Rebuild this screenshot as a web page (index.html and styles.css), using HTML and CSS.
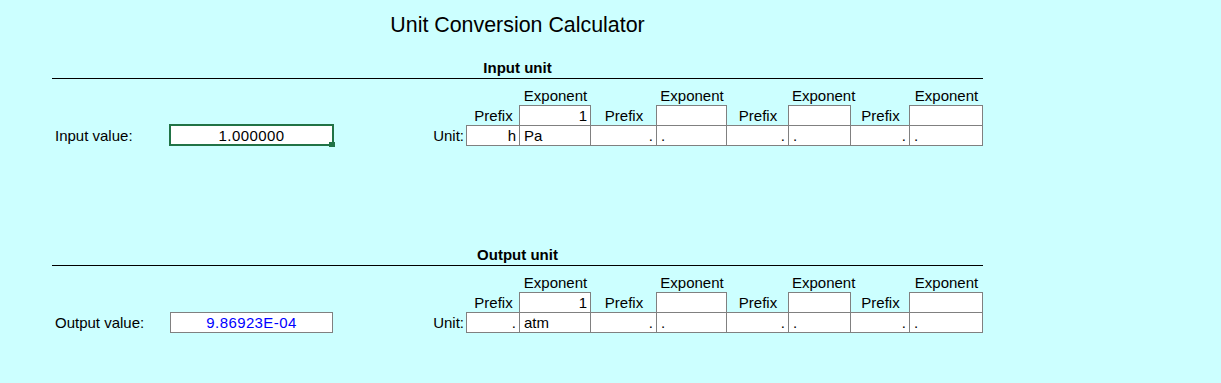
FILE: index.html
```html
<!DOCTYPE html>
<html lang="en">
<head>
    <meta charset="UTF-8">
    <meta name="viewport" content="width=device-width, initial-scale=1.0">
    <title>Unit Conversion Calculator</title>
    <link rel="stylesheet" href="styles.css">
</head>
<body>
    <div class="sheet">
        <h1 class="title">Unit Conversion Calculator</h1>

        <div class="block">
            <div class="block-head">Input unit</div>
            <div class="grid">
                <div class="span4"></div>
                <div class="label center">Exponent</div>
                <div></div>
                <div class="label center">Exponent</div>
                <div></div>
                <div class="label center">Exponent</div>
                <div></div>
                <div class="label center">Exponent</div>

                <div class="span3"></div>
                <div class="label center">Prefix</div>
                <div class="box right">1</div>
                <div class="label center">Prefix</div>
                <div class="box right"></div>
                <div class="label center">Prefix</div>
                <div class="box right"></div>
                <div class="label center">Prefix</div>
                <div class="box right"></div>

                <div class="label name">Input value:</div>
                <div class="value selected">1.000000<span class="handle"></span></div>
                <div class="label right">Unit:</div>
                <div class="box right">h</div>
                <div class="box">Pa</div>
                <div class="box right">.</div>
                <div class="box">.</div>
                <div class="box right">.</div>
                <div class="box">.</div>
                <div class="box right">.</div>
                <div class="box">.</div>
            </div>
        </div>

        <div class="block">
            <div class="block-head">Output unit</div>
            <div class="grid">
                <div class="span4"></div>
                <div class="label center">Exponent</div>
                <div></div>
                <div class="label center">Exponent</div>
                <div></div>
                <div class="label center">Exponent</div>
                <div></div>
                <div class="label center">Exponent</div>

                <div class="span3"></div>
                <div class="label center">Prefix</div>
                <div class="box right">1</div>
                <div class="label center">Prefix</div>
                <div class="box right"></div>
                <div class="label center">Prefix</div>
                <div class="box right"></div>
                <div class="label center">Prefix</div>
                <div class="box right"></div>

                <div class="label name">Output value:</div>
                <div class="value result">9.86923E-04</div>
                <div class="label right">Unit:</div>
                <div class="box right">.</div>
                <div class="box">atm</div>
                <div class="box right">.</div>
                <div class="box">.</div>
                <div class="box right">.</div>
                <div class="box">.</div>
                <div class="box right">.</div>
                <div class="box">.</div>
            </div>
        </div>
    </div>
</body>
</html>
```

FILE: styles.css
```css
html, body {
    margin: 0;
    background: #ccffff;
}
body {
    font-family: "Liberation Sans", Arial, sans-serif;
    font-size: 15px;
    color: #000;
}
.sheet {
    padding-left: 52px;
    width: 931px;
}
.title {
    margin: 0;
    padding-top: 13px;
    height: 45px;
    font-size: 21.4px;
    font-weight: normal;
    line-height: 24px;
    text-align: center;
}
.block + .block {
    margin-top: 99px;
}
.block-head {
    height: 20px;
    line-height: 20px;
    font-weight: bold;
    text-align: center;
    border-bottom: 1px solid #000;
}
.grid {
    display: grid;
    grid-template-columns: 117px 165px 133px 53px 71px 66px 70px 62px 62px 59px 73px;
    grid-template-rows: repeat(3, 20px);
    margin-top: 7px;
    line-height: 19px;
    white-space: nowrap;
}
.span4 {
    grid-column: span 4;
}
.span3 {
    grid-column: span 3;
}
.label {
    padding: 0 3px;
}
.center {
    text-align: center;
}
.right {
    text-align: right;
}
.box {
    margin: -1px 0 0 -1px;
    padding: 0 3px 0 4px;
    border: 1px solid #808080;
    background: #fff;
    overflow: hidden;
}
.box.right {
    padding: 0 3px 0 2px;
}
.value {
    position: relative;
    background: #fff;
    text-align: center;
    letter-spacing: 0.4px;
}
.selected {
    margin-top: -2px;
    border: 2px solid #217346;
}
.handle {
    position: absolute;
    right: -3px;
    bottom: -3px;
    width: 6px;
    height: 5px;
    background: #217346;
}
.result {
    margin: -1px 1px 0 1px;
    border: 1px solid #808080;
    color: #0000ff;
}
```
